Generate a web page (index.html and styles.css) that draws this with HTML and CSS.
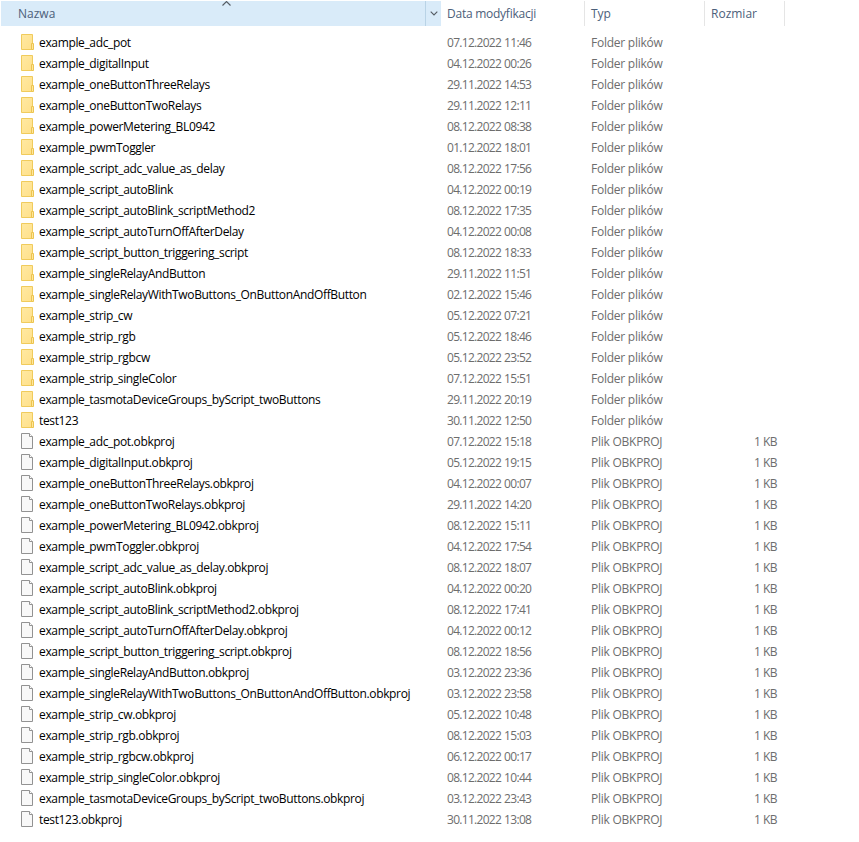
FILE: index.html
```html
<!DOCTYPE html>
<html lang="pl">
<head>
<meta charset="utf-8">
<title>Pliki</title>
<link rel="stylesheet" href="styles.css">
</head>
<body>
<svg class="symbols" aria-hidden="true">
  <defs>
    <linearGradient id="paper" x1="0" y1="0" x2="1" y2="1"><stop offset="0" stop-color="#ffe9a2"/><stop offset="1" stop-color="#ffe08a"/></linearGradient>
  </defs>
  <symbol id="folder" viewBox="0 0 13 16">
    <path d="M.5.5h11v15H.5z" fill="url(#paper)" stroke="#f0cb5c"/>
    <path d="M10.500 15.500V9.500h2v6z" fill="#ffe69a" stroke="#ecc450"/>
  </symbol>
  <symbol id="file" viewBox="0 0 13 16">
    <path d="M.5.5h8l3 3v12H.5z" fill="#f8f8f8" stroke="#929292"/>
    <path d="M8.500.5v3h3" fill="#fff" stroke="#929292"/>
  </symbol>
</svg>
<header class="row head">
  <div class="head-name"><span>Nazwa</span>
    <svg class="sort" viewBox="0 0 9 5"><path d="M.5 4.500l4-4 4 4"/></svg>
    <span class="drop"><svg viewBox="0 0 8 5"><path d="M.7.7L4 4 7.300.7"/></svg></span>
  </div>
  <div class="head-date">Data modyfikacji</div>
  <div class="head-type">Typ</div>
  <div class="head-size">Rozmiar</div>
</header>
<main id="list"></main>
<script src="list.js"></script>
</body>
</html>
```
FILE: styles.css
```css
* { box-sizing: border-box; }
body { margin: 0; background: #fff; font: 12px/21px "Open Sans", "Noto Sans", sans-serif; overflow: hidden; }
.symbols { position: absolute; width: 0; height: 0; }
.row { display: grid; grid-template-columns: 441px 144px 120px 80px; height: 21px; width: 785px; white-space: nowrap; }
.head { height: 25px; margin: 1px 0 6px; line-height: 25px; color: #4c607a; }
.head > div { border-right: 1px solid #e5e5e5; padding-left: 6px; }
.head .head-name { position: relative; display: flex; justify-content: space-between; margin-left: 1px; padding-left: 17px; border: 0; background: #d9ebf9; }
.sort { position: absolute; left: 221px; top: 0; width: 9px; height: 5px; }
.head svg { fill: none; stroke: #555c64; stroke-width: 1.1; }
.drop { display: flex; align-items: center; justify-content: center; width: 16px; border-left: 1px solid #b9d3e6; }
.drop svg { width: 8px; height: 5px; margin-bottom: 1px; }
.head-date { letter-spacing: -.25px; }
.name { display: flex; padding-left: 21px; color: #000; letter-spacing: -.35px; }
.name svg { width: 13px; height: 16px; margin: 2px 5px 0 0; }
.date, .type, .size { color: #6d6d6d; padding-left: 6px; }
.date { letter-spacing: -.7px; word-spacing: .5px; }
.type { letter-spacing: -.25px; }
.size { padding: 0 8px 0 0; text-align: right; letter-spacing: -.5px; }
```
FILE: list.js
```js
const folders = `example_adc_pot|07.12.2022 11:46
example_digitalInput|04.12.2022 00:26
example_oneButtonThreeRelays|29.11.2022 14:53
example_oneButtonTwoRelays|29.11.2022 12:11
example_powerMetering_BL0942|08.12.2022 08:38
example_pwmToggler|01.12.2022 18:01
example_script_adc_value_as_delay|08.12.2022 17:56
example_script_autoBlink|04.12.2022 00:19
example_script_autoBlink_scriptMethod2|08.12.2022 17:35
example_script_autoTurnOffAfterDelay|04.12.2022 00:08
example_script_button_triggering_script|08.12.2022 18:33
example_singleRelayAndButton|29.11.2022 11:51
example_singleRelayWithTwoButtons_OnButtonAndOffButton|02.12.2022 15:46
example_strip_cw|05.12.2022 07:21
example_strip_rgb|05.12.2022 18:46
example_strip_rgbcw|05.12.2022 23:52
example_strip_singleColor|07.12.2022 15:51
example_tasmotaDeviceGroups_byScript_twoButtons|29.11.2022 20:19
test123|30.11.2022 12:50`.split("\n").map(line => line.split("|"));
const fileDates = `07.12.2022 15:18
05.12.2022 19:15
04.12.2022 00:07
29.11.2022 14:20
08.12.2022 15:11
04.12.2022 17:54
08.12.2022 18:07
04.12.2022 00:20
08.12.2022 17:41
04.12.2022 00:12
08.12.2022 18:56
03.12.2022 23:36
03.12.2022 23:58
05.12.2022 10:48
08.12.2022 15:03
06.12.2022 00:17
08.12.2022 10:44
03.12.2022 23:43
30.11.2022 13:08`.split("\n");
const row = (icon, name, date, type, size) => `<div class="row"><div class="name"><svg><use href="#${icon}"/></svg><span>${name}</span></div><div class="date">${date}</div><div class="type">${type}</div><div class="size">${size}</div></div>`;
document.getElementById("list").innerHTML =
  folders.map(([name, date]) => row("folder", name, date, "Folder plików", "")).join("") +
  folders.map(([name], i) => row("file", name + ".obkproj", fileDates[i], "Plik OBKPROJ", "1 KB")).join("");
```
